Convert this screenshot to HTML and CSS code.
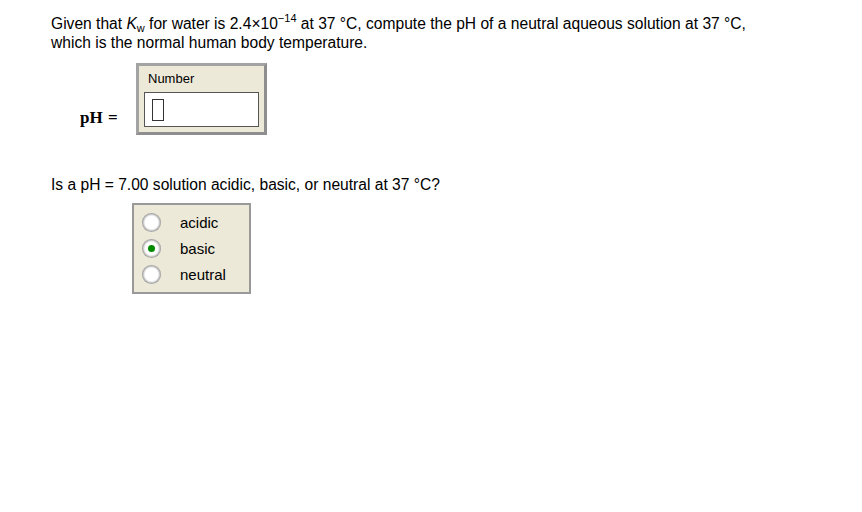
FILE: index.html
```html
<!DOCTYPE html>
<html lang="en">
<head>
    <meta charset="UTF-8">
    <title>Question</title>
    <link rel="stylesheet" href="styles.css">
</head>
<body>
    <div class="question">
        <p class="prompt">Given that <i>K</i><sub>w</sub> for water is 2.4&#215;10<sup>&#8722;14</sup> at 37 &#176;C, compute the pH of a neutral aqueous solution at 37 &#176;C, which is the normal human body temperature.</p>

        <div class="answer-row">
            <span class="var-label">pH =</span>
            <div class="number-box">
                <div class="number-title">Number</div>
                <div class="number-field"><span class="caret"></span></div>
            </div>
        </div>

        <p class="prompt second">Is a pH = 7.00 solution acidic, basic, or neutral at 37 &#176;C?</p>

        <div class="choice-box">
            <label class="choice"><span class="radio"></span>acidic</label>
            <label class="choice"><span class="radio checked"></span>basic</label>
            <label class="choice"><span class="radio"></span>neutral</label>
        </div>
    </div>
</body>
</html>
```

FILE: styles.css
```css
body {
    background-color: #ffffff;
    color: #000;
    font-family: "Liberation Sans", Arial, sans-serif;
    margin: 0;
    padding: 0;
}
.question {
    padding: 14px 0 0 51px;
}
.prompt {
    font-size: 15.6px;
    line-height: 19px;
    margin: 0;
    width: 720px;
}
.prompt sub {
    font-size: 11px;
    vertical-align: -3px;
    line-height: 0;
}
.prompt sup {
    font-size: 11px;
    vertical-align: 7px;
    line-height: 0;
}
.answer-row {
    display: flex;
    align-items: flex-end;
    margin-top: 11px;
}
.var-label {
    font-family: "Liberation Serif", "Times New Roman", serif;
    font-weight: bold;
    font-size: 17px;
    word-spacing: 1px;
    width: 85px;
    padding-left: 29px;
    box-sizing: border-box;
    margin-bottom: 7px;
}
.number-box {
    width: 131px;
    height: 72px;
    box-sizing: border-box;
    background-color: #ece9d8;
    border: 3px solid #999;
    border-color: #a3a3a3 #8e8e8e #8e8e8e #a3a3a3;
    padding: 5px 5px 0 5px;
}
.number-title {
    font-size: 13px;
    height: 21px;
    line-height: 15px;
    padding-left: 4px;
}
.number-field {
    background: #fff;
    border: 1px solid #555;
    height: 35px;
    box-sizing: border-box;
    padding: 6px 0 0 7px;
}
.caret {
    display: block;
    width: 12px;
    height: 22px;
    box-sizing: border-box;
    border: 1px solid #333;
}
.second {
    margin-top: 40px;
}
.choice-box {
    margin: 9px 0 0 81px;
    width: 119px;
    box-sizing: border-box;
    background-color: #ece9d8;
    border: 2px solid #999;
    padding: 4px 0 5px 8px;
}
.choice {
    display: flex;
    align-items: center;
    height: 26px;
    font-size: 15px;
}
.radio {
    width: 19px;
    height: 19px;
    box-sizing: border-box;
    border-radius: 50%;
    margin-right: 19px;
    background: radial-gradient(circle, #ffffff 48%, #dcdcdc 56%, #8e8e8e 72%, #6e6e6e 86%, #9c9c9c 100%);
    display: flex;
    align-items: center;
    justify-content: center;
}
.radio.checked::after {
    content: "";
    width: 7px;
    height: 7px;
    border-radius: 50%;
    background: #008c00;
}
```
